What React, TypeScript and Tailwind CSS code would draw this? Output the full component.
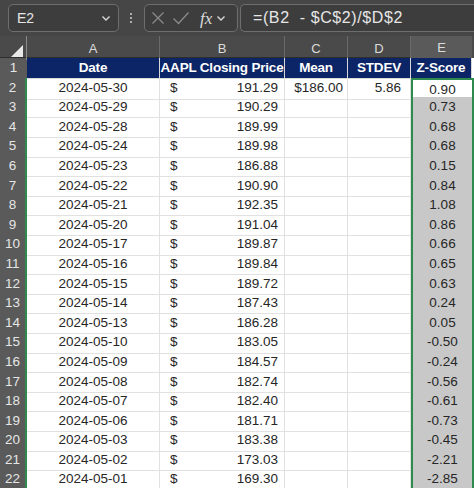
import React from "react";

const rows: [string, string, string, string, string][] = [
  ["2024-05-30", "191.29", "$186.00", "5.86", "0.90"],
  ["2024-05-29", "190.29", "", "", "0.73"],
  ["2024-05-28", "189.99", "", "", "0.68"],
  ["2024-05-24", "189.98", "", "", "0.68"],
  ["2024-05-23", "186.88", "", "", "0.15"],
  ["2024-05-22", "190.90", "", "", "0.84"],
  ["2024-05-21", "192.35", "", "", "1.08"],
  ["2024-05-20", "191.04", "", "", "0.86"],
  ["2024-05-17", "189.87", "", "", "0.66"],
  ["2024-05-16", "189.84", "", "", "0.65"],
  ["2024-05-15", "189.72", "", "", "0.63"],
  ["2024-05-14", "187.43", "", "", "0.24"],
  ["2024-05-13", "186.28", "", "", "0.05"],
  ["2024-05-10", "183.05", "", "", "-0.50"],
  ["2024-05-09", "184.57", "", "", "-0.24"],
  ["2024-05-08", "182.74", "", "", "-0.56"],
  ["2024-05-07", "182.40", "", "", "-0.61"],
  ["2024-05-06", "181.71", "", "", "-0.73"],
  ["2024-05-03", "183.38", "", "", "-0.45"],
  ["2024-05-02", "173.03", "", "", "-2.21"],
  ["2024-05-01", "169.30", "", "", "-2.85"],
];

const cols = "grid grid-cols-[27px_133px_125px_63px_63px_61px_2px]";

function Chevron({ className = "" }: { className?: string }) {
  return (
    <svg width="12" height="12" viewBox="0 0 12 12" className={className}>
      <path d="M2.5 4.5 L6 8 L9.5 4.5" fill="none" stroke="#d8d8d8" strokeWidth="1.4" />
    </svg>
  );
}

export default function App() {
  return (
    <div
      className="w-[474px] h-[488px] overflow-hidden bg-white text-[13.5px]"
      style={{ fontFamily: '"Liberation Sans", Arial, sans-serif' }}
    >
      {/* Formula bar */}
      <div className="h-[36px] bg-[#464646] flex items-center pl-[8px] gap-0">
        <div className="w-[111px] h-[28px] rounded-[5px] border border-[#6e6e6e] bg-[#3d3d3d] flex items-center justify-between pl-[8px] pr-[6px]">
          <span className="text-[#e6e6e6] text-[14px]">E2</span>
          <Chevron />
        </div>
        <div className="w-[22px] flex flex-col items-center justify-center gap-[2px] ml-[1px]">
          <span className="w-[2px] h-[2px] bg-[#cfcfcf] rounded-full" />
          <span className="w-[2px] h-[2px] bg-[#cfcfcf] rounded-full" />
          <span className="w-[2px] h-[2px] bg-[#cfcfcf] rounded-full" />
        </div>
        <div className="w-[94px] h-[28px] rounded-[5px] border border-[#6e6e6e] bg-[#3d3d3d] flex items-center pl-[5px] gap-[6px] ml-[2px]">
          <svg width="16" height="16" viewBox="0 0 16 16">
            <path d="M2.5 2.5 L13.5 13.5 M13.5 2.5 L2.5 13.5" stroke="#8a8a8a" strokeWidth="1.3" fill="none" />
          </svg>
          <svg width="18" height="16" viewBox="0 0 18 16">
            <path d="M1.5 8.5 L6.5 13.5 L16.5 2.5" stroke="#8a8a8a" strokeWidth="1.3" fill="none" />
          </svg>
          <span
            className="text-[#dcdcdc] text-[17px] italic leading-none ml-[4px]"
            style={{ fontFamily: '"Liberation Serif", "Times New Roman", serif' }}
          >
            fx
          </span>
          <Chevron className="-ml-[3px]" />
        </div>
        <div className="flex-1 h-[28px] rounded-l-[5px] border border-r-0 border-[#6e6e6e] bg-[#3d3d3d] flex items-center pl-[12px] ml-[2px] text-[#e6e6e6] text-[16px] tracking-[0.6px] whitespace-pre">
          {"=(B2  - $C$2)/$D$2"}
        </div>
      </div>

      {/* Column headers */}
      <div className={`${cols} h-[22px] bg-[#4a4a4a] text-[#dcdcdc] text-[13px] border-b border-[#2e2e2e]`}>
        <div className="relative border-r border-[#8a8a8a]">
          <svg width="12" height="12" viewBox="0 0 12 12" className="absolute right-[3px] bottom-[3px]">
            <path d="M12 0 L12 12 L0 12 Z" fill="#e8e8e8" />
          </svg>
        </div>
        {["A", "B", "C", "D"].map((c) => (
          <div key={c} className="flex items-center justify-center border-r border-[#6a6a6a] pt-[2px]">
            {c}
          </div>
        ))}
        <div className="flex items-center justify-center bg-[#5a5a5a] border-b-2 border-[#2f8a4f] pt-[2px]">E</div>
        <div className="bg-[#4a4a4a]" />
      </div>

      {/* Header row 1 */}
      <div className={`${cols} h-[19.6px]`}>
        <div className="bg-[#5a5a5a] text-[#e6e6e6] flex items-center justify-center border-b border-[#727272]">1</div>
        {["Date", "AAPL Closing Price", "Mean", "STDEV", "Z-Score"].map((h) => (
          <div
            key={h}
            className="bg-[#0c2566] text-white font-bold flex items-center justify-center border-b border-r border-[#d9d9d9] whitespace-nowrap overflow-hidden tracking-[-0.2px]"
          >
            {h}
          </div>
        ))}
        <div className="bg-white" />
      </div>

      {/* Data rows */}
      {rows.map((r, i) => {
        const isFirst = i === 0;
        return (
          <div key={i} className={`${cols} h-[19.6px] text-[#262626]`}>
            <div className="bg-[#5a5a5a] text-[#e6e6e6] flex items-center justify-center border-b border-[#727272] border-r-2 border-r-[#2f8a4f]">
              {i + 2}
            </div>
            <div className="flex items-center justify-center border-b border-r border-[#e1e1e1]">{r[0]}</div>
            <div className="flex items-center justify-between pl-[10px] pr-[6px] border-b border-r border-[#e1e1e1]">
              <span>$</span>
              <span>{r[1]}</span>
            </div>
            <div className="flex items-center justify-end pr-[4px] border-b border-r border-[#e1e1e1]">{r[2]}</div>
            <div className="flex items-center justify-end pr-[9px] border-b border-r border-[#e1e1e1]">{r[3]}</div>
            <div
              className={`flex items-center justify-center border-l-2 border-[#2f8a4f] ${
                isFirst ? "bg-white border-t-2" : "bg-[#c8c8c8] border-b border-b-[#b4b4b4]"
              }`}
            >
              {r[4]}
            </div>
            <div className="bg-[#2f8a4f] w-[1.5px]" />
          </div>
        );
      })}
    </div>
  );
}
